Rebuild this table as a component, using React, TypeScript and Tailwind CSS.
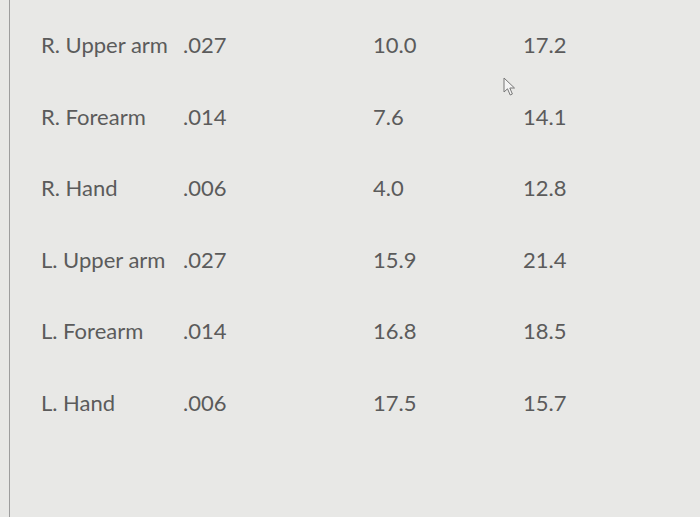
const rows = [
  ["R. Upper arm", ".027", "10.0", "17.2"],
  ["R. Forearm", ".014", "7.6", "14.1"],
  ["R. Hand", ".006", "4.0", "12.8"],
  ["L. Upper arm", ".027", "15.9", "21.4"],
  ["L. Forearm", ".014", "16.8", "18.5"],
  ["L. Hand", ".006", "17.5", "15.7"],
];

export default function App() {
  return (
    <main
      className="relative w-[700px] h-[517px] overflow-hidden bg-[#e8e8e6] text-[#5b5b5b]"
      style={{ fontFamily: "Lato, 'Open Sans', sans-serif" }}
    >
      {/* LEFT RULE */}
      <div className="h-full ml-[9px] border-l border-[#9d9d9d] pt-[30px]">
        {/* TABLE */}
        <div className="flex flex-col gap-[42.6px] pl-[31px] text-[22px] leading-[29px]">
          {rows.map((r) => (
            <div key={r[0]} className="grid grid-cols-[142px_190px_150px_1fr]">
              <span>{r[0]}</span>
              <span>{r[1]}</span>
              <span>{r[2]}</span>
              <span>{r[3]}</span>
            </div>
          ))}
        </div>
      </div>

      {/* CURSOR */}
      <svg
        className="absolute left-[503px] top-[77px]"
        width="14"
        height="20"
        viewBox="0 0 14 20"
      >
        <path
          d="M1 1 L1 15 L4.5 11.8 L7.2 18 L9.4 17 L6.8 11 L11.5 11 Z"
          fill="#f4f4f4"
          stroke="#777"
          strokeWidth="1"
          strokeLinejoin="round"
        />
      </svg>
    </main>
  );
}
